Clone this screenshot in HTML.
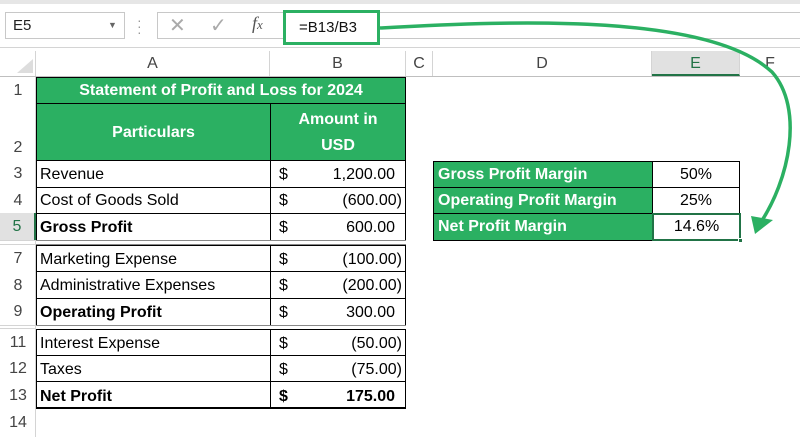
<!DOCTYPE html>
<html><head><meta charset="utf-8"><style>
body{margin:0;width:800px;height:437px;overflow:hidden;background:#fff;font-family:"Liberation Sans",sans-serif;position:relative}
div{position:absolute;box-sizing:border-box}
.c{font-size:16px;color:#000;line-height:28px;white-space:nowrap}
.g{background:#2bb062;color:#fff;font-weight:bold}
.rh{left:0;width:36px;text-align:center;color:#444;font-size:16px;line-height:28px}
.ch{top:51px;height:25px;text-align:center;color:#444;font-size:16px;line-height:26px;border-right:1px solid #d4d4d4}
</style></head><body>
<div style="left:0;top:0;width:800px;height:4px;background:#e6e6e6"></div>
<div style="left:0;top:4px;width:800px;height:44px;background:#fff;border-bottom:1px solid #d4d4d4"></div>
<div style="left:5px;top:12px;width:120px;height:27px;border:1px solid #c8c8c8;font-size:15px;line-height:25px;padding-left:7px;color:#222">E5<span style="position:absolute;left:102px;top:0;font-size:9px;color:#666">▼</span></div>
<div style="left:137px;top:17px;width:3px;height:18px;font-size:14px;color:#999;line-height:6px">·<br>·<br>·</div>
<div style="left:157px;top:12px;width:650px;height:27px;border:1px solid #c8c8c8"></div>
<div style="left:169px;top:13px;font-size:20px;color:#aaa">✕</div>
<div style="left:210px;top:13px;font-size:20px;color:#aaa">✓</div>
<div style="left:252px;top:13px;font-size:18px;color:#555;font-style:italic;font-family:'Liberation Serif',serif"><i>f</i><span style="font-size:13px">x</span></div>
<div style="left:283px;top:10px;width:97px;height:35px;border:3px solid #2bb062;background:#fff;font-size:15px;line-height:29px;padding-left:13px;color:#111">=B13/B3</div>
<div style="left:0;top:51px;width:800px;height:26px;background:#fff;border-bottom:1px solid #bfbfbf"></div>
<div style="left:0;top:51px;width:36px;height:25px;border-right:1px solid #d4d4d4"><svg width="36" height="25"><polygon points="33,8 33,22 17,22" fill="#ddd"/></svg></div>
<div class="ch" style="left:36px;width:234px">A</div>
<div class="ch" style="left:270px;width:136px">B</div>
<div class="ch" style="left:406px;width:27px">C</div>
<div class="ch" style="left:433px;width:219px">D</div>
<div class="ch" style="left:652px;width:88px;background:#e1e1e1;border-bottom:2px solid #217346;color:#217346">E</div>
<div class="ch" style="left:740px;width:60px;border:none">F</div>
<div style="left:0;top:77px;width:36px;height:360px;border-right:1px solid #d4d4d4"></div>
<div class="rh" style="top:77px">1</div>
<div class="rh" style="top:134px">2</div>
<div class="rh" style="top:160px">3</div>
<div class="rh" style="top:187px">4</div>
<div class="rh" style="top:213px;background:#e1e1e1;color:#217346;border-right:2px solid #217346;height:27px;line-height:27px">5</div>
<div class="rh" style="top:245px">7</div>
<div class="rh" style="top:272px">8</div>
<div class="rh" style="top:298px">9</div>
<div class="rh" style="top:329px">11</div>
<div class="rh" style="top:355px">12</div>
<div class="rh" style="top:382px">13</div>
<div class="rh" style="top:409px">14</div>
<div style="left:0;top:240px;width:36px;height:5px;border-top:1px solid #d4d4d4;border-bottom:1px solid #d4d4d4"></div>
<div style="left:0;top:325px;width:36px;height:4px;border-top:1px solid #d4d4d4;border-bottom:1px solid #d4d4d4"></div>
<div class="c g" style="left:36px;top:77px;width:370px;height:27px;text-align:center;border:1px solid #000;line-height:26px">Statement of Profit and Loss for 2024</div>
<div class="c g" style="left:36px;top:103px;width:235px;height:58px;text-align:center;line-height:58px;border:1px solid #000">Particulars</div>
<div class="c g" style="left:270px;top:103px;width:136px;height:58px;text-align:center;line-height:26px;padding-top:3px;border:1px solid #000;white-space:normal">Amount in<br>USD</div>
<div style="left:36px;top:160px;width:370px;height:81px;border:1px solid #000;border-top:none"></div>
<div style="left:36px;top:245px;width:370px;height:81px;border:1px solid #000"></div>
<div style="left:36px;top:329px;width:370px;height:80px;border:1px solid #000;border-bottom:2px solid #000"></div>
<div style="left:270px;top:160px;width:1px;height:81px;background:#000"></div>
<div style="left:270px;top:245px;width:1px;height:81px;background:#000"></div>
<div style="left:270px;top:329px;width:1px;height:80px;background:#000"></div>
<div style="left:36px;top:187px;width:370px;height:1px;background:#000"></div>
<div style="left:36px;top:213px;width:370px;height:1px;background:#000"></div>
<div style="left:36px;top:271px;width:370px;height:1px;background:#000"></div>
<div style="left:36px;top:298px;width:370px;height:1px;background:#000"></div>
<div style="left:36px;top:355px;width:370px;height:1px;background:#000"></div>
<div style="left:36px;top:381px;width:370px;height:1px;background:#000"></div>
<div style="left:36px;top:240px;width:370px;height:5px;border-top:1px solid #888;border-bottom:1px solid #888"></div>
<div style="left:36px;top:325px;width:370px;height:4px;border-top:1px solid #888"></div>

<div class="c" style="left:40px;top:161px">Revenue</div>
<div class="c" style="left:40px;top:187px">Cost of Goods Sold</div>
<div class="c" style="left:40px;top:214px;font-weight:bold">Gross Profit</div>
<div class="c" style="left:40px;top:246px">Marketing Expense</div>
<div class="c" style="left:40px;top:272px">Administrative Expenses</div>
<div class="c" style="left:40px;top:299px;font-weight:bold">Operating Profit</div>
<div class="c" style="left:40px;top:330px">Interest Expense</div>
<div class="c" style="left:40px;top:356px">Taxes</div>
<div class="c" style="left:40px;top:383px;font-weight:bold">Net Profit</div>

<div class="c" style="left:279px;top:161px">$</div><div class="c" style="left:270px;width:125px;text-align:right;top:161px">1,200.00</div>
<div class="c" style="left:279px;top:187px">$</div><div class="c" style="left:270px;width:132px;text-align:right;top:187px">(600.00)</div>
<div class="c" style="left:279px;top:214px">$</div><div class="c" style="left:270px;width:125px;text-align:right;top:214px">600.00</div>
<div class="c" style="left:279px;top:246px">$</div><div class="c" style="left:270px;width:132px;text-align:right;top:246px">(100.00)</div>
<div class="c" style="left:279px;top:272px">$</div><div class="c" style="left:270px;width:132px;text-align:right;top:272px">(200.00)</div>
<div class="c" style="left:279px;top:299px">$</div><div class="c" style="left:270px;width:125px;text-align:right;top:299px">300.00</div>
<div class="c" style="left:279px;top:330px">$</div><div class="c" style="left:270px;width:132px;text-align:right;top:330px">(50.00)</div>
<div class="c" style="left:279px;top:356px">$</div><div class="c" style="left:270px;width:132px;text-align:right;top:356px">(75.00)</div>
<div class="c" style="left:279px;top:383px;font-weight:bold">$</div><div class="c" style="left:270px;width:125px;text-align:right;top:383px;font-weight:bold">175.00</div>

<div class="c g" style="left:433px;top:161px;width:220px;height:27px;border:1px solid #000;padding-left:4px;line-height:26px">Gross Profit Margin</div>
<div class="c g" style="left:433px;top:187px;width:220px;height:27px;border:1px solid #000;padding-left:4px;line-height:26px">Operating Profit Margin</div>
<div class="c g" style="left:433px;top:213px;width:220px;height:28px;border:1px solid #000;padding-left:4px;line-height:26px">Net Profit Margin</div>
<div class="c" style="left:652px;top:161px;width:88px;height:27px;border:1px solid #000;text-align:center;line-height:26px">50%</div>
<div class="c" style="left:652px;top:187px;width:88px;height:27px;border:1px solid #000;text-align:center;line-height:26px">25%</div>
<div class="c" style="left:652px;top:213px;width:89px;height:28px;border:2px solid #217346;text-align:center;line-height:24px">14.6%</div>
<div style="left:738px;top:238px;width:5px;height:5px;background:#217346;border:1px solid #fff"></div>

<svg style="position:absolute;left:0;top:0" width="800" height="437">
<path d="M380,28 C520,20 710,14 772,72 C804,108 790,180 759,225" fill="none" stroke="#2bb062" stroke-width="3.5"/>
<polygon points="755,234 751,216 773,220" fill="#2bb062"/>
</svg>
</body></html>
